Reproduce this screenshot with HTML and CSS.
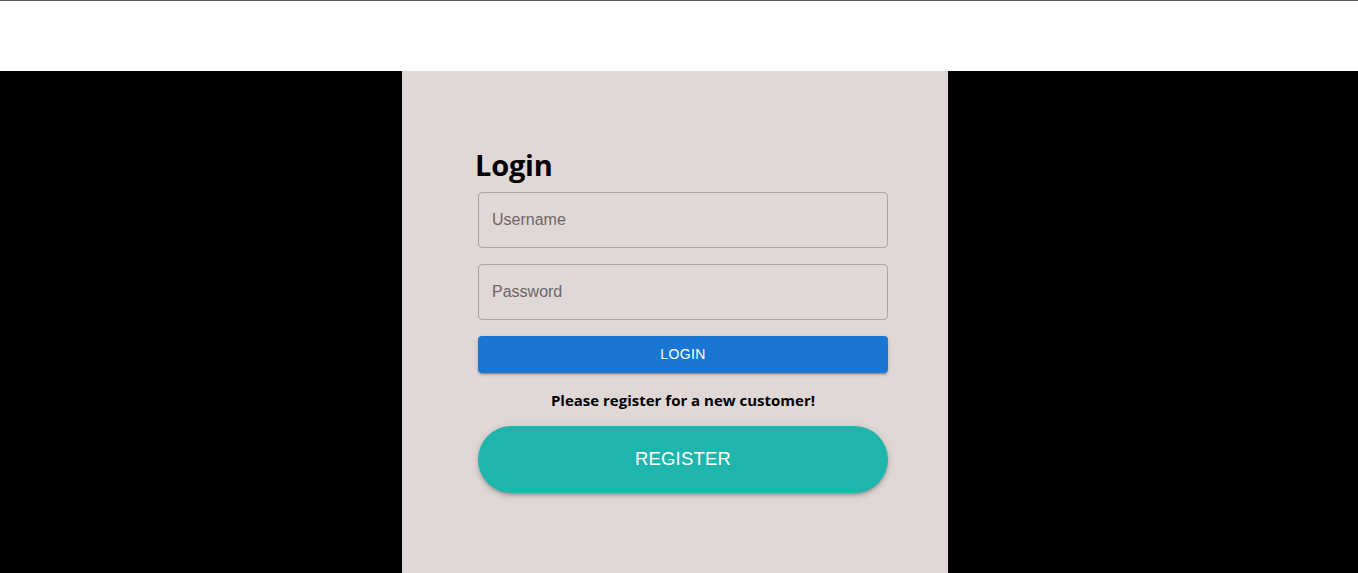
FILE: index.html
```html
<!DOCTYPE html>
<html>
<head>
<meta charset="utf-8">
<link rel="stylesheet" href="styles.css">
</head>
<body>
<div class="topbar"></div>
<main class="stage">
  <section class="panel">
    <form class="form">
      <h2 class="title">Login</h2>
      <div class="field"><span class="label">Username</span></div>
      <div class="field"><span class="label">Password</span></div>
      <button type="button" class="btn-login">LOGIN</button>
      <p class="note">Please register for a new customer!</p>
      <button type="button" class="btn-register">REGISTER</button>
    </form>
  </section>
</main>
</body>
</html>
```
FILE: styles.css
```css
html, body {
  margin: 0;
  padding: 0;
  height: 100%;
  background: #fff;
}
body {
  display: flex;
  flex-direction: column;
  overflow: hidden;
}
.topbar {
  height: 71px;
  border-top: 1px solid #5a5a5a;
  box-sizing: border-box;
  background: #fff;
}
.stage {
  flex: 1;
  background: #000;
  display: flex;
  justify-content: center;
}
.panel {
  width: 546px;
  margin-right: 8px;
  background: #e0d8d7;
  box-sizing: border-box;
  padding: 76px 60px 0 76px;
}
.form {
  display: flex;
  flex-direction: column;
  width: 410px;
}
.title {
  font-family: "Open Sans", "DejaVu Sans", sans-serif;
  font-weight: 700;
  font-size: 29px;
  line-height: 36px;
  margin: 0 0 9px -3px;
  color: #000;
  letter-spacing: -0.2px;
}
.field {
  height: 56px;
  box-sizing: border-box;
  border: 1px solid #a9a3a3;
  border-radius: 4px;
  display: flex;
  align-items: center;
  padding-left: 13px;
  margin-bottom: 16px;
}
.label {
  font-family: "Liberation Sans", Arial, sans-serif;
  font-size: 16px;
  color: #6b6667;
}
.btn-login {
  height: 37px;
  border: none;
  border-radius: 4px;
  background: #1976d2;
  color: #fff;
  font-family: "Liberation Sans", Arial, sans-serif;
  font-size: 14px;
  letter-spacing: 0.4px;
  line-height: 35px;
  box-shadow: 0 3px 1px -2px rgba(0,0,0,0.2), 0 2px 2px 0 rgba(0,0,0,0.14), 0 1px 5px 0 rgba(0,0,0,0.12);
  padding: 0 0 1px;
}
.note {
  font-family: "Open Sans", "DejaVu Sans", sans-serif;
  font-weight: 700;
  font-size: 15px;
  text-align: center;
  margin: 16px 0 15px;
  line-height: 22px;
  color: #000;
  letter-spacing: 0;
}
.btn-register {
  height: 67px;
  border: none;
  border-radius: 34px;
  background: #20b5ac;
  color: #fff;
  font-family: "Liberation Sans", Arial, sans-serif;
  font-size: 18.5px;
  letter-spacing: 0.2px;
  box-shadow: 0 3px 3px -2px rgba(0,0,0,0.2), 0 3px 4px 0 rgba(0,0,0,0.14), 0 1px 8px 0 rgba(0,0,0,0.12);
  padding: 0 0 2px;
}
```
